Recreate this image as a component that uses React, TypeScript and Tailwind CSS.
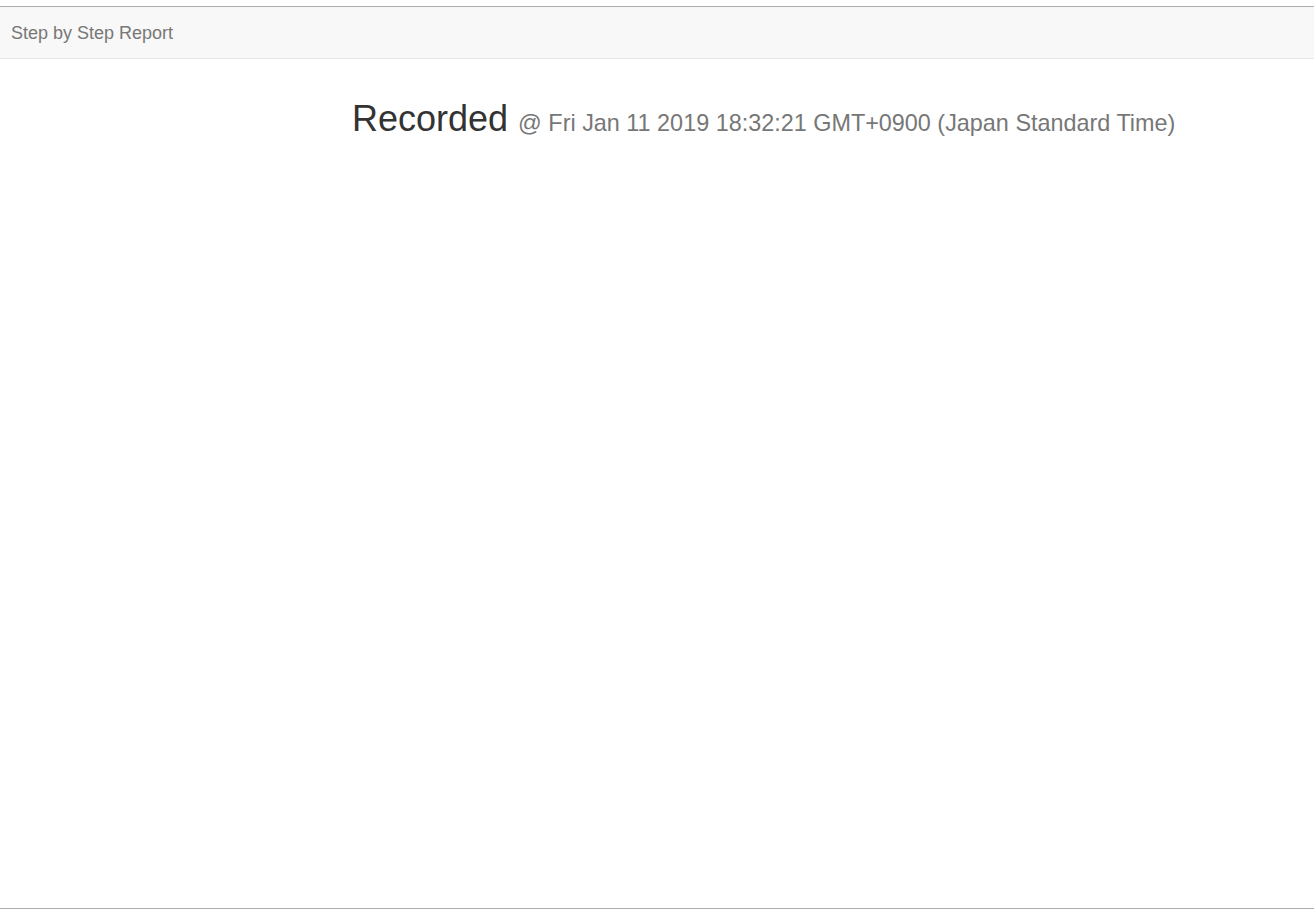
export default function App() {
  return (
    <div className="w-[1314px] h-[913px] bg-white overflow-hidden" style={{ fontFamily: '"Liberation Sans", Arial, sans-serif' }}>
      <div className="mt-[6px] h-[903px] border-t border-b border-[#adadad] flex flex-col">
        <div className="h-[52px] shrink-0 bg-[#f8f8f8] border-b border-[#e7e7e7] flex items-center px-[11px]">
          <span className="text-[18px] leading-[20px] text-[#777777]">Step by Step Report</span>
        </div>
        <div className="pt-[40px] pl-[352px]">
          <h1 className="text-[36px] leading-[1.1] text-[#333333] font-normal whitespace-nowrap">
            Recorded{' '}
            <small className="text-[23.4px] text-[#777777]">@ Fri Jan 11 2019 18:32:21 GMT+0900 (Japan Standard Time)</small>
          </h1>
        </div>
      </div>
    </div>
  );
}
